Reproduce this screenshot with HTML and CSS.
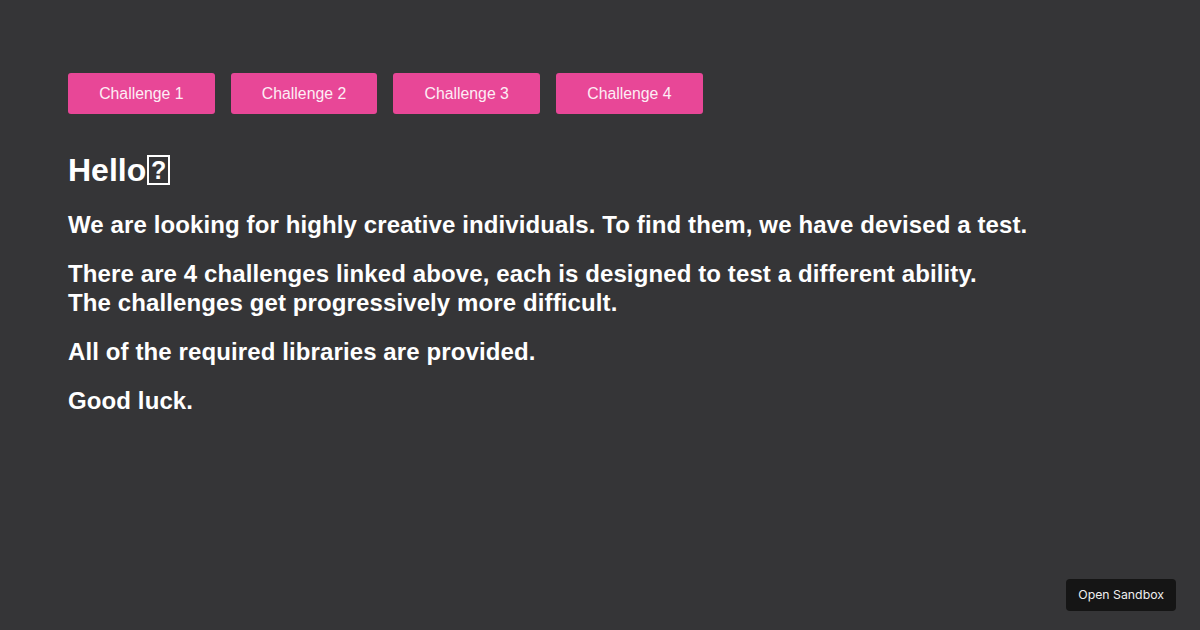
FILE: index.html
```html
<!DOCTYPE html>
<html lang="en">
<head>
  <meta charset="UTF-8" />
  <title>Challenges</title>
  <link rel="stylesheet" href="styles.css">
</head>
<body>

  <div class="page">
    <!-- challenge links -->
    <nav class="nav">
      <a href="#" class="nav-btn">Challenge 1</a>
      <a href="#" class="nav-btn">Challenge 2</a>
      <a href="#" class="nav-btn">Challenge 3</a>
      <a href="#" class="nav-btn">Challenge 4</a>
    </nav>

    <!-- emoji shows as a missing glyph box -->
    <h1 class="title">Hello<span class="tofu">?</span></h1>
    <p class="text">We are looking for highly creative individuals. To find them, we have devised a test.</p>
    <p class="text">There are 4 challenges linked above, each is designed to test a different ability.<br>The challenges get progressively more difficult.</p>
    <p class="text">All of the required libraries are provided.</p>
    <p class="text">Good luck.</p>
  </div>

  <a href="#" class="sandbox-btn">Open Sandbox</a>

</body>
</html>
```

FILE: styles.css
```css
body {
  margin: 0;
  background-color: #353537;
  font-family: "Liberation Sans", Arial, sans-serif;
  color: #fff;
  height: 630px;
  overflow: hidden;
}
.page {
  padding: 73px 68px 0;
}
.nav {
  display: flex;
  gap: 16px;
}
.nav-btn {
  display: inline-block;
  width: 146.7px;
  height: 41px;
  line-height: 41px;
  text-align: center;
  background-color: #e84797;
  color: #fdeef5;
  font-size: 15.8px;
  text-decoration: none;
  border-radius: 3px;
}
.title {
  font-size: 32px;
  font-weight: bold;
  margin: 36px 0 0;
  height: 40px;
  line-height: 40px;
}
.tofu {
  display: inline-block;
  box-sizing: border-box;
  width: 23px;
  height: 30px;
  margin-left: 1px;
  border: 2px solid #fff;
  font-size: 25px;
  line-height: 26px;
  text-align: center;
  vertical-align: 2px;
}
.text {
  font-size: 24px;
  font-weight: bold;
  letter-spacing: 0.11px;
  line-height: 29px;
  margin: 20px 0 0;
}
.title + .text {
  margin-top: 20px;
}
.sandbox-btn {
  position: fixed;
  right: 24px;
  bottom: 19px;
  background-color: #151515;
  color: #eee;
  font-family: Inter, "Noto Sans", sans-serif;
  font-size: 12.3px;
  padding: 0 12px;
  height: 32px;
  line-height: 32px;
  border-radius: 4px;
  text-decoration: none;
}
```
